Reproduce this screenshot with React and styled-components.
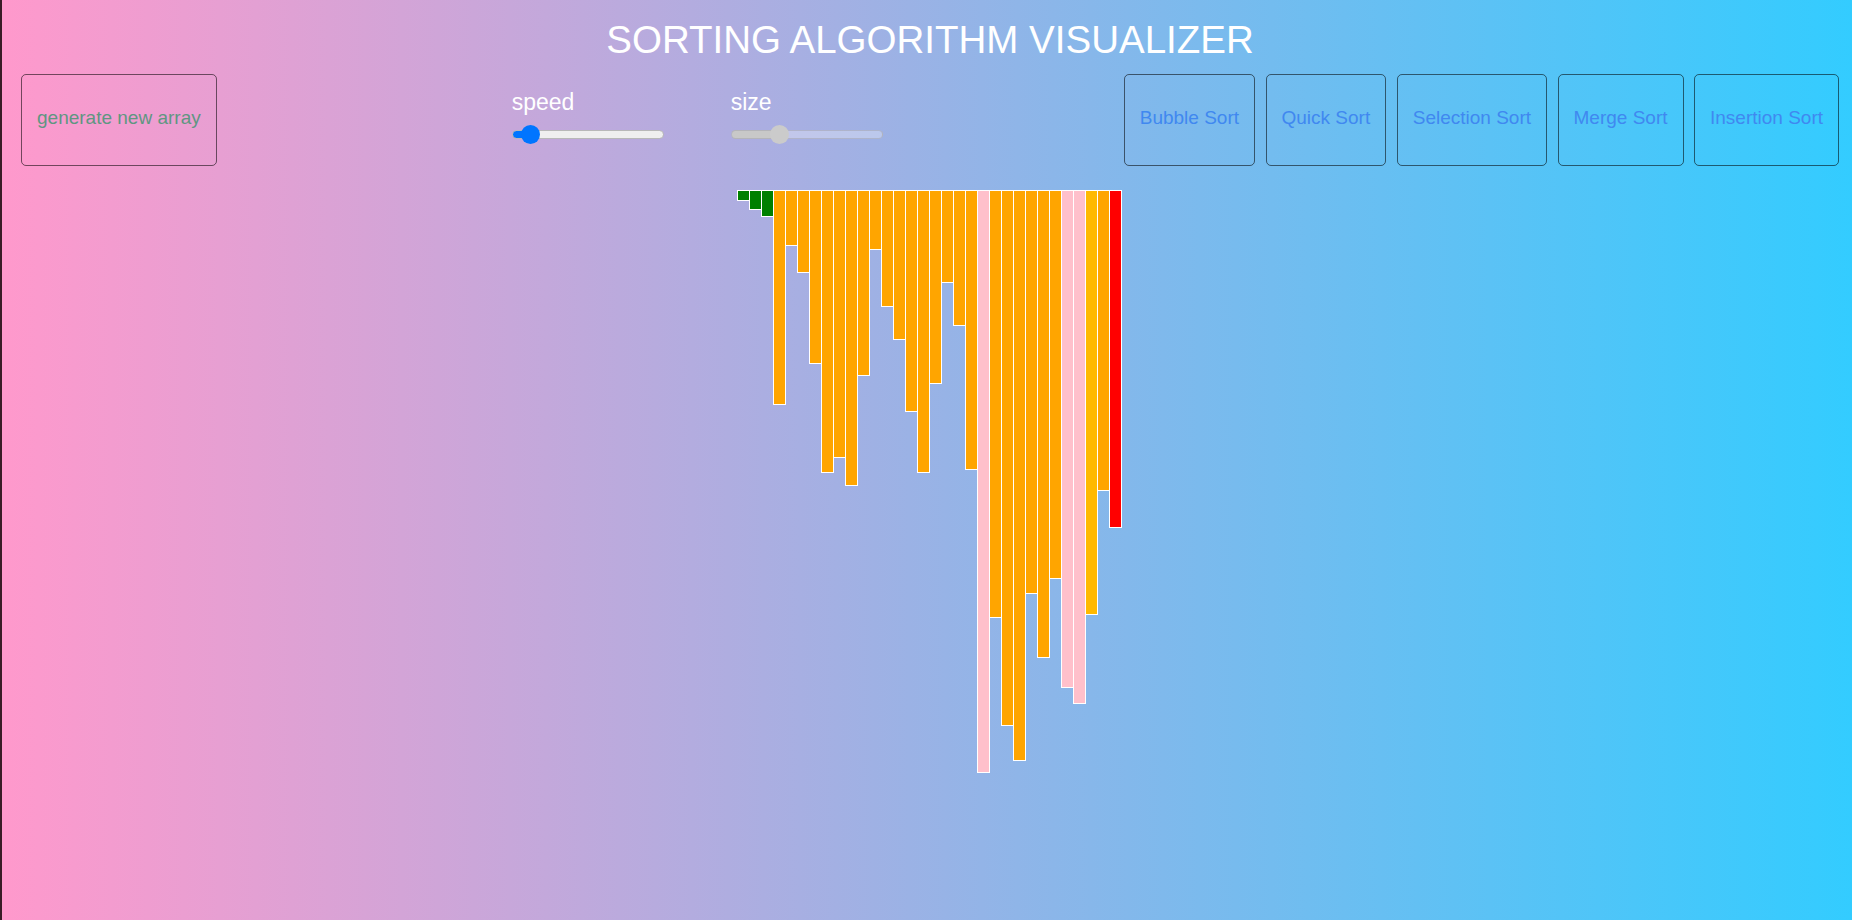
import React from 'react';
import styled, { createGlobalStyle } from 'styled-components';

const GlobalStyle = createGlobalStyle`
  html, body {
    margin: 0;
    padding: 0;
  }
  body {
    font-family: "Liberation Sans", Arial, sans-serif;
  }
`;

const Page = styled.div`
  min-height: 100vh;
  box-sizing: border-box;
  border-left: 2px solid #3a1c26;
  padding-left: 6px;
  background: linear-gradient(to right, #ff99cc 0%, #33ccff 100%);
  font-family: "Liberation Sans", Arial, sans-serif;
`;

const Title = styled.h1`
  margin: 0;
  padding-top: 18px;
  font-size: 38.5px;
  line-height: 44px;
  font-weight: normal;
  text-align: center;
  color: #ffffff;
`;

const Toolbar = styled.div`
  display: flex;
  align-items: flex-start;
  margin-top: 12px;
  padding: 0 13px;
`;

const Button = styled.button`
  height: 92px;
  padding: 0 15px 5px;
  background: transparent;
  border: 1px solid rgba(0, 0, 0, 0.55);
  border-radius: 5px;
  font-family: "Liberation Sans", Arial, sans-serif;
  font-size: 19px;
  color: ${(p) => p.$color || '#4088f0'};
  cursor: pointer;
  white-space: nowrap;
`;

const Controls = styled.div`
  display: flex;
  gap: 67px;
  margin-left: 295px;
  padding-top: 15px;
`;

const ControlGroup = styled.div`
  display: flex;
  flex-direction: column;
`;

const Label = styled.label`
  font-size: 23px;
  color: #ffffff;
  margin-bottom: 14px;
`;

const Range = styled.input`
  -webkit-appearance: none;
  appearance: none;
  width: 152px;
  height: 9px;
  margin: 0;
  box-sizing: border-box;
  border-radius: 5px;
  border: 1px solid ${(p) => (p.disabled ? 'rgba(160,160,170,0.5)' : '#b8b8b8')};
  background: ${(p) =>
    p.disabled
      ? `linear-gradient(to right, #c8c8c8 0 ${p.$pct}%, rgba(255,255,255,0.3) ${p.$pct}% 100%)`
      : `linear-gradient(to right, #0075ff 0 ${p.$pct}%, #efefef ${p.$pct}% 100%)`};
  outline: none;

  &::-webkit-slider-thumb {
    -webkit-appearance: none;
    appearance: none;
    width: 19px;
    height: 19px;
    border-radius: 50%;
    border: none;
    background: ${(p) => (p.disabled ? '#cbcbcb' : '#0075ff')};
  }
`;

const SortGroup = styled.div`
  display: flex;
  gap: 10.5px;
  margin-left: auto;
`;

const Chart = styled.div`
  display: flex;
  justify-content: center;
  align-items: flex-start;
  margin-top: 23.5px;
`;

const Bar = styled.div`
  width: 13px;
  box-sizing: border-box;
  border: 1px solid #ffffff;
  margin-left: -1px;
  background: ${(p) => p.$color};
`;

const COLORS = {
  sorted: '#008000',
  idle: '#ffa500',
  compare: '#ffc0cb',
  current: '#ffb900',
  pivot: '#ff0000',
};

const heights = [
  11.5, 20.7, 27.6, 215.8, 56.3, 83.8, 174.5, 283.6, 268.6, 296.2, 186, 60.8,
  117.1, 150.4, 222.7, 283.6, 194, 93, 136.6, 280.1, 583.2, 428.2, 536.1, 571.7,
  404.1, 468.4, 389.2, 498.2, 514.3, 425.9, 301.9, 338.7,
];

const stateOf = (i) => {
  if (i < 3) return 'sorted';
  if (i === 20 || i === 27 || i === 28) return 'compare';
  if (i === 29) return 'current';
  if (i === 31) return 'pivot';
  return 'idle';
};

const sorts = ['Bubble Sort', 'Quick Sort', 'Selection Sort', 'Merge Sort', 'Insertion Sort'];

export default function App() {
  return (
    <Page>
      <GlobalStyle />
      <Title>SORTING ALGORITHM VISUALIZER</Title>
      <Toolbar>
        <Button $color="#5f9682">generate new array</Button>
        <Controls>
          <ControlGroup>
            <Label htmlFor="speed">speed</Label>
            <Range id="speed" type="range" min="0" max="100" defaultValue="6" $pct={11} />
          </ControlGroup>
          <ControlGroup>
            <Label htmlFor="size">size</Label>
            <Range id="size" type="range" min="0" max="100" defaultValue="29" $pct={31} disabled />
          </ControlGroup>
        </Controls>
        <SortGroup>
          {sorts.map((s) => (
            <Button key={s}>{s}</Button>
          ))}
        </SortGroup>
      </Toolbar>
      <Chart>
        {heights.map((h, i) => (
          <Bar key={i} style={{ height: h }} $color={COLORS[stateOf(i)]} />
        ))}
      </Chart>
    </Page>
  );
}
